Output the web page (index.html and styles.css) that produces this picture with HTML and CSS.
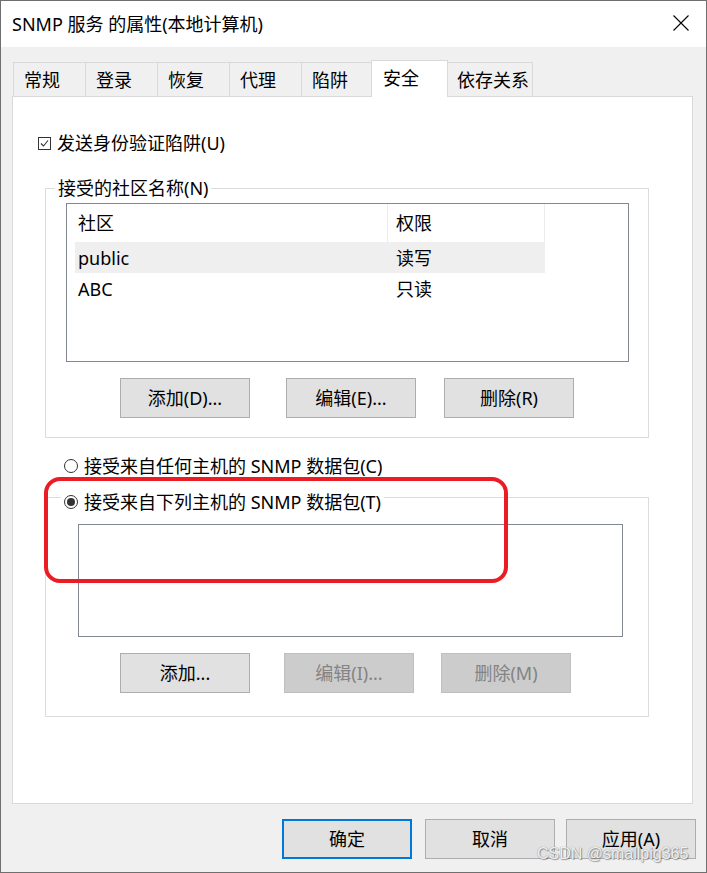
FILE: index.html
```html
<!DOCTYPE html>
<html lang="zh-CN">
<head>
<meta charset="utf-8">
<title>SNMP 服务 的属性(本地计算机)</title>
<link rel="stylesheet" href="styles.css">
</head>
<body>
<div class="window">
  <div class="titlebar">
    <span class="title">SNMP 服务 的属性(本地计算机)</span>
    <svg class="close" width="16" height="16" viewBox="0 0 16 16"><path d="M0.5 0.5 L15.5 15.5 M15.5 0.5 L0.5 15.5" stroke="#000" stroke-width="1.1" fill="none"/></svg>
  </div>
  <div class="tabs">
    <div class="tab">常规</div>
    <div class="tab">登录</div>
    <div class="tab">恢复</div>
    <div class="tab">代理</div>
    <div class="tab">陷阱</div>
    <div class="tab active">安全</div>
    <div class="tab">依存关系</div>
  </div>
  <div class="panel">
    <div class="check-row">
      <span class="checkbox"><svg width="11" height="11" viewBox="0 0 11 11"><path d="M2 5.5 L4.5 8 L9 2.5" stroke="#333" stroke-width="1.1" fill="none"/></svg></span>
      <span>发送身份验证陷阱(U)</span>
    </div>
    <fieldset class="group group1">
      <legend class="group-label">接受的社区名称(N)</legend>
      <div class="listview">
        <div class="lv-header">
          <div class="hc hc1">社区</div>
          <div class="hc hc2">权限</div>
        </div>
        <div class="lv-row selected">
          <div class="rc rc1">public</div>
          <div class="rc rc2">读写</div>
        </div>
        <div class="lv-row">
          <div class="rc rc1">ABC</div>
          <div class="rc rc2">只读</div>
        </div>
      </div>
      <div class="btn-row row1">
        <button class="btn">添加(D)...</button>
        <button class="btn b2">编辑(E)...</button>
        <button class="btn b3">删除(R)</button>
      </div>
    </fieldset>
    <div class="radio-row">
      <span class="radio"></span>
      <span>接受来自任何主机的 SNMP 数据包(C)</span>
    </div>
    <fieldset class="group group2">
      <legend class="radio-legend">
        <span class="radio checked"></span>
        <span>接受来自下列主机的 SNMP 数据包(T)</span>
      </legend>
      <div class="hostlist"></div>
      <div class="btn-row row2">
        <button class="btn">添加...</button>
        <button class="btn disabled b2">编辑(I)...</button>
        <button class="btn disabled b3">删除(M)</button>
      </div>
    </fieldset>
  </div>
  <div class="footer">
    <button class="btn default">确定</button>
    <button class="btn cancel">取消</button>
    <button class="btn apply">应用(A)</button>
  </div>
  <div class="annot"></div>
  <div class="watermark">CSDN @smallpig365</div>
</div>
</body>
</html>
```
FILE: styles.css
```css
* { box-sizing: border-box; }
html, body { margin: 0; padding: 0; background: #f0f0f0; }
body {
  font-family: "Noto Sans", "Noto Sans CJK SC", sans-serif;
  font-size: 18px;
  line-height: 22px;
  color: #000;
}
.window {
  position: relative;
  width: 707px;
  height: 873px;
  border: 1px solid #6f6f6f;
  background: #f0f0f0;
  overflow: hidden;
}
.titlebar {
  height: 46px;
  background: #fff;
  display: flex;
  align-items: center;
  justify-content: space-between;
  padding: 0 17px 0 11px;
}
.title { font-size: 18px; }
.close { display: block; margin-top: -2px; }

.tabs {
  display: flex;
  align-items: flex-end;
  height: 36px;
  margin-top: 13px;
  padding-left: 12px;
}
.tab {
  height: 34px;
  min-width: 72px;
  padding: 0 3px 0 10px;
  border: 1px solid #d9d9d9;
  border-bottom: none;
  border-right: none;
  background: #f0f0f0;
  display: flex;
  align-items: center;
}
.tab:last-child { border-right: 1px solid #d9d9d9; }
.tab.active {
  height: 37px;
  min-width: 77px;
  margin: 0 -2px -1px -2px;
  padding-left: 11px;
  padding-bottom: 3px;
  background: #fff;
  border-right: 1px solid #d9d9d9;
  position: relative;
  z-index: 1;
}
.panel {
  margin-left: 11px;
  width: 681px;
  height: 708px;
  background: #fff;
  border: 1px solid #d9d9d9;
}
.check-row {
  display: flex;
  align-items: center;
  margin: 35px 0 0 25px;
  height: 22px;
}
.checkbox {
  width: 13px;
  height: 13px;
  border: 1px solid #333;
  margin-right: 6px;
  display: flex;
  align-items: center;
  justify-content: center;
}
.checkbox svg { display: block; }

.group {
  margin: 0 0 0 32px;
  width: 604px;
  border: 1px solid #dcdcdc;
  padding: 0;
  min-width: 0;
}
.group1 { margin-top: 23px; padding-bottom: 19px; }
.group-label {
  margin-left: 9px;
  padding: 0 3px;
  line-height: 22px;
}
.listview {
  margin: 4px 0 0 20px;
  width: 563px;
  height: 159px;
  border: 1px solid #828790;
  background: #fff;
}
.lv-header {
  display: flex;
  height: 38px;
}
.hc {
  display: flex;
  align-items: center;
}
.hc1 { width: 320px; padding-left: 11px; }
.hc2 {
  width: 158px;
  padding-left: 8px;
  border-left: 1px solid #ececec;
  border-right: 1px solid #ececec;
}
.lv-row {
  display: flex;
  height: 31px;
  margin-left: 8px;
  width: 470px;
  align-items: center;
}
.lv-row.selected { background: #efefef; }
.rc1 { width: 312px; padding-left: 3px; }
.rc2 { padding-left: 9px; }

.btn-row { display: flex; }
.row1 { margin: 16px 0 0 74px; }
.row1 .b2 { margin-left: 36px; }
.row1 .b3 { margin-left: 28px; }
.row2 { margin: 16px 0 0 74px; }
.row2 .b2 { margin-left: 34px; }
.row2 .b3 { margin-left: 27px; }
.btn {
  width: 130px;
  height: 40px;
  padding: 0;
  background: #e1e1e1;
  border: 1px solid #adadad;
  font: inherit;
  color: #000;
  line-height: 22px;
}
.btn.disabled {
  background: #cccccc;
  border-color: #bfbfbf;
  color: #838383;
}

.radio-row {
  display: flex;
  align-items: center;
  height: 22px;
  margin: 17px 0 0 51px;
}
.radio {
  width: 14px;
  height: 14px;
  border: 1px solid #333;
  border-radius: 50%;
  margin-right: 6px;
  display: flex;
  align-items: center;
  justify-content: center;
  flex: none;
}
.radio.checked::after {
  content: "";
  width: 8px;
  height: 8px;
  border-radius: 50%;
  background: #333;
}
.group2 { margin-top: 4px; padding-bottom: 23px; }
.radio-legend {
  margin-left: 15px;
  padding: 10px 3px 0 3px;
  display: flex;
  align-items: center;
  line-height: 22px;
}
.hostlist {
  margin: 11px 0 0 32px;
  width: 545px;
  height: 113px;
  border: 1px solid #828790;
  background: #fff;
}

.footer {
  display: flex;
  margin: 15px 0 0 281px;
}
.footer .btn.default { border: 2px solid #0078d7; }
.footer .cancel { margin-left: 13px; }
.footer .apply { margin-left: 11px; }

.annot {
  position: absolute;
  left: 43px;
  top: 476px;
  width: 464px;
  height: 106px;
  border: 4px solid #ec1c24;
  border-radius: 16px;
}
.watermark {
  position: absolute;
  left: 536px;
  top: 843px;
  font-family: "Liberation Sans", Arial, sans-serif;
  font-size: 16px;
  line-height: 20px;
  color: rgba(255, 255, 255, 0.9);
  text-shadow: 0 0 1px #7a7a7a, 1px 1px 1px rgba(0, 0, 0, 0.35);
}
```
